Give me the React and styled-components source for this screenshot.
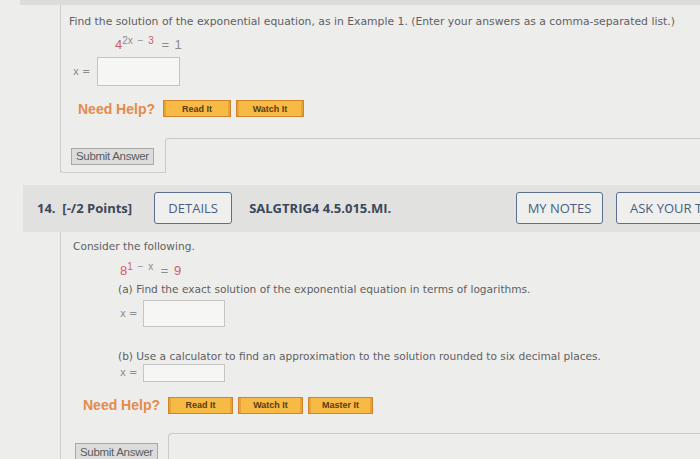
import React from 'react';
import styled, { createGlobalStyle } from 'styled-components';

const Global = createGlobalStyle`
  html, body { margin: 0; padding: 0; }
  body {
    width: 700px;
    height: 459px;
    overflow: hidden;
    background: #ededeb;
    font-family: "DejaVu Sans", Verdana, sans-serif;
  }
`;

const Page = styled.div`
  width: 700px;
  height: 459px;
  overflow: hidden;
  display: flex;
  flex-direction: column;
`;

const TopBand = styled.div`
  height: 5px;
  background: #dcdcda;
  margin-left: 20px;
  flex-shrink: 0;
`;

const Card = styled.div`
  margin-left: 60px;
  border-left: 1px solid #cfcfcd;
  display: flex;
  flex-direction: column;
  flex-shrink: 0;
`;

const Body = styled.div`
  padding: ${p => p.$pad};
  display: flex;
  flex-direction: column;
`;

const Text = styled.div`
  font-size: ${p => p.$size || 10.6}px;
  color: #5f6062;
  line-height: 13px;
  white-space: nowrap;
  margin-left: ${p => p.$indent || 0}px;
  margin-top: ${p => p.$top || 0}px;
`;

const Equation = styled.div`
  font-family: "Liberation Sans", Arial, sans-serif;
  font-size: 13px;
  color: #8b8c8e;
  line-height: 15px;
  margin-left: ${p => p.$indent}px;
  margin-top: ${p => p.$top}px;
  white-space: nowrap;
  word-spacing: 2px;
  sup {
    font-size: 10px;
    vertical-align: 5px;
    margin-right: 2px;
  }
`;

const Num = styled.span`
  color: #c9626a;
`;

const AnswerRow = styled.div`
  display: flex;
  align-items: center;
  gap: ${p => p.$gap}px;
  margin-left: ${p => p.$indent}px;
  margin-top: ${p => p.$top}px;
  font-family: "DejaVu Sans", sans-serif;
  font-size: 10px;
  color: #8d8e90;
`;

const Input = styled.div`
  width: ${p => p.$w}px;
  height: ${p => p.$h}px;
  box-sizing: border-box;
  border: 1px solid #c4c4c2;
  background: #f6f6f4;
`;

const HelpRow = styled.div`
  display: flex;
  align-items: center;
  margin-left: ${p => p.$indent}px;
  margin-top: ${p => p.$top}px;
  gap: 5px;
`;

const HelpLabel = styled.span`
  font-family: "Liberation Sans", Arial, sans-serif;
  font-weight: bold;
  font-size: 14px;
  color: #e48a4c;
  margin-right: 3px;
`;

const HelpButton = styled.div`
  width: ${p => p.$w || 68}px;
  height: 17px;
  box-sizing: border-box;
  border: 1px solid #d08628;
  box-shadow: inset 2px 0 0 #e9a236, inset -2px 0 0 #e9a236;
  background: #f6ba45;
  display: flex;
  align-items: center;
  justify-content: center;
  font-family: "Liberation Sans", Arial, sans-serif;
  font-weight: bold;
  font-size: 9px;
  color: #5b3b12;
`;

const Footer = styled.div`
  display: flex;
  margin-top: ${p => p.$top}px;
`;

const SubmitTab = styled.div`
  width: ${p => p.$w}px;
  padding: ${p => p.$pad};
  border-bottom: 1px solid #cfcfcd;
  border-bottom-left-radius: 4px;
  margin-left: -1px;
  border-left: 1px solid #cfcfcd;
  box-sizing: border-box;
`;

const Filler = styled.div`
  flex: 1;
  border-top: 1px solid #c9c9c7;
  border-left: 1px solid #c9c9c7;
  border-top-left-radius: 4px;
`;

const SubmitButton = styled.div`
  display: inline-flex;
  align-items: center;
  justify-content: center;
  height: 17px;
  padding: 0 4px;
  box-sizing: border-box;
  border: 1px solid #a9a9a7;
  background: #dcdcda;
  font-family: "Liberation Sans", Arial, sans-serif;
  font-size: 11.5px;
  color: #5b5c5e;
  letter-spacing: -0.3px;
`;

const Header = styled.div`
  margin-left: 23px;
  height: 47px;
  margin-top: 12px;
  background: #e1e1df;
  display: flex;
  align-items: center;
  padding-left: 14px;
  flex-shrink: 0;
  font-family: "Open Sans", "DejaVu Sans", sans-serif;
  color: #3d4759;
`;

const Title = styled.span`
  font-weight: bold;
  font-size: 13px;
  white-space: nowrap;
  margin-right: ${p => p.$mr}px;
`;

const OutlineButton = styled.div`
  width: ${p => p.$w}px;
  height: 32px;
  flex-shrink: 0;
  box-sizing: border-box;
  border: 1.5px solid #5c6f8e;
  border-radius: 3px;
  background: #efefed;
  display: flex;
  align-items: center;
  justify-content: ${p => p.$clip ? 'flex-start' : 'center'};
  padding-left: ${p => p.$clip ? 13 : 0}px;
  font-size: 13px;
  color: #4a5e7d;
  white-space: nowrap;
  overflow: hidden;
  margin-right: ${p => p.$mr || 0}px;
`;

const Spacer = styled.div`
  flex: 1;
`;

function Help({ indent, top, master }) {
  return (
    <HelpRow $indent={indent} $top={top}>
      <HelpLabel>Need Help?</HelpLabel>
      <HelpButton $w={master ? 65 : 68}>Read It</HelpButton>
      <HelpButton $w={master ? 65 : 68}>Watch It</HelpButton>
      {master && <HelpButton $w={65}>Master It</HelpButton>}
    </HelpRow>
  );
}

export default function App() {
  return (
    <Page>
      <Global />
      <TopBand />
      <Card>
        <Body $pad="10px 0 0 8px">
          <Text $size={10.8}>
            Find the solution of the exponential equation, as in Example 1. (Enter your answers as a comma-separated list.)
          </Text>
          <Equation $indent={46} $top={5}>
            <Num>4</Num><sup>2x − <Num>3</Num></sup> = 1
          </Equation>
          <AnswerRow $indent={4} $gap={7} $top={5}>
            <span>x =</span>
            <Input $w={83} $h={29} />
          </AnswerRow>
          <Help indent={9} top={14} />
        </Body>
        <Footer $top={21}>
          <SubmitTab $w={105} $pad="7px 0 7px 10px">
            <SubmitButton>Submit Answer</SubmitButton>
          </SubmitTab>
          <Filler />
        </Footer>
      </Card>

      <Header>
        <Title $mr={22}>14.&nbsp; [-/2 Points]</Title>
        <OutlineButton $w={78} $mr={17}>DETAILS</OutlineButton>
        <Title $mr={0}>SALGTRIG4 4.5.015.MI.</Title>
        <Spacer />
        <OutlineButton $w={87} $mr={13}>MY NOTES</OutlineButton>
        <OutlineButton $w={95} $mr={-11} $clip>ASK YOUR TEACHER</OutlineButton>
      </Header>

      <Card>
        <Body $pad="8px 0 0 12px">
          <Text>Consider the following.</Text>
          <Equation $indent={47} $top={6}>
            <Num>8</Num><sup><Num>1</Num> − x</sup> = <Num>9</Num>
          </Equation>
          <Text $indent={45} $top={5}>
            (a) Find the exact solution of the exponential equation in terms of logarithms.
          </Text>
          <AnswerRow $indent={47} $gap={6} $top={4}>
            <span>x =</span>
            <Input $w={82} $h={27} />
          </AnswerRow>
          <Text $indent={45} $top={23}>
            (b) Use a calculator to find an approximation to the solution rounded to six decimal places.
          </Text>
          <AnswerRow $indent={47} $gap={6} $top={1}>
            <span>x =</span>
            <Input $w={82} $h={18} />
          </AnswerRow>
          <Help indent={10} top={15} master />
        </Body>
        <Footer $top={19}>
          <SubmitTab $w={108} $pad="8px 0 7px 14px">
            <SubmitButton>Submit Answer</SubmitButton>
          </SubmitTab>
          <Filler />
        </Footer>
      </Card>
    </Page>
  );
}
